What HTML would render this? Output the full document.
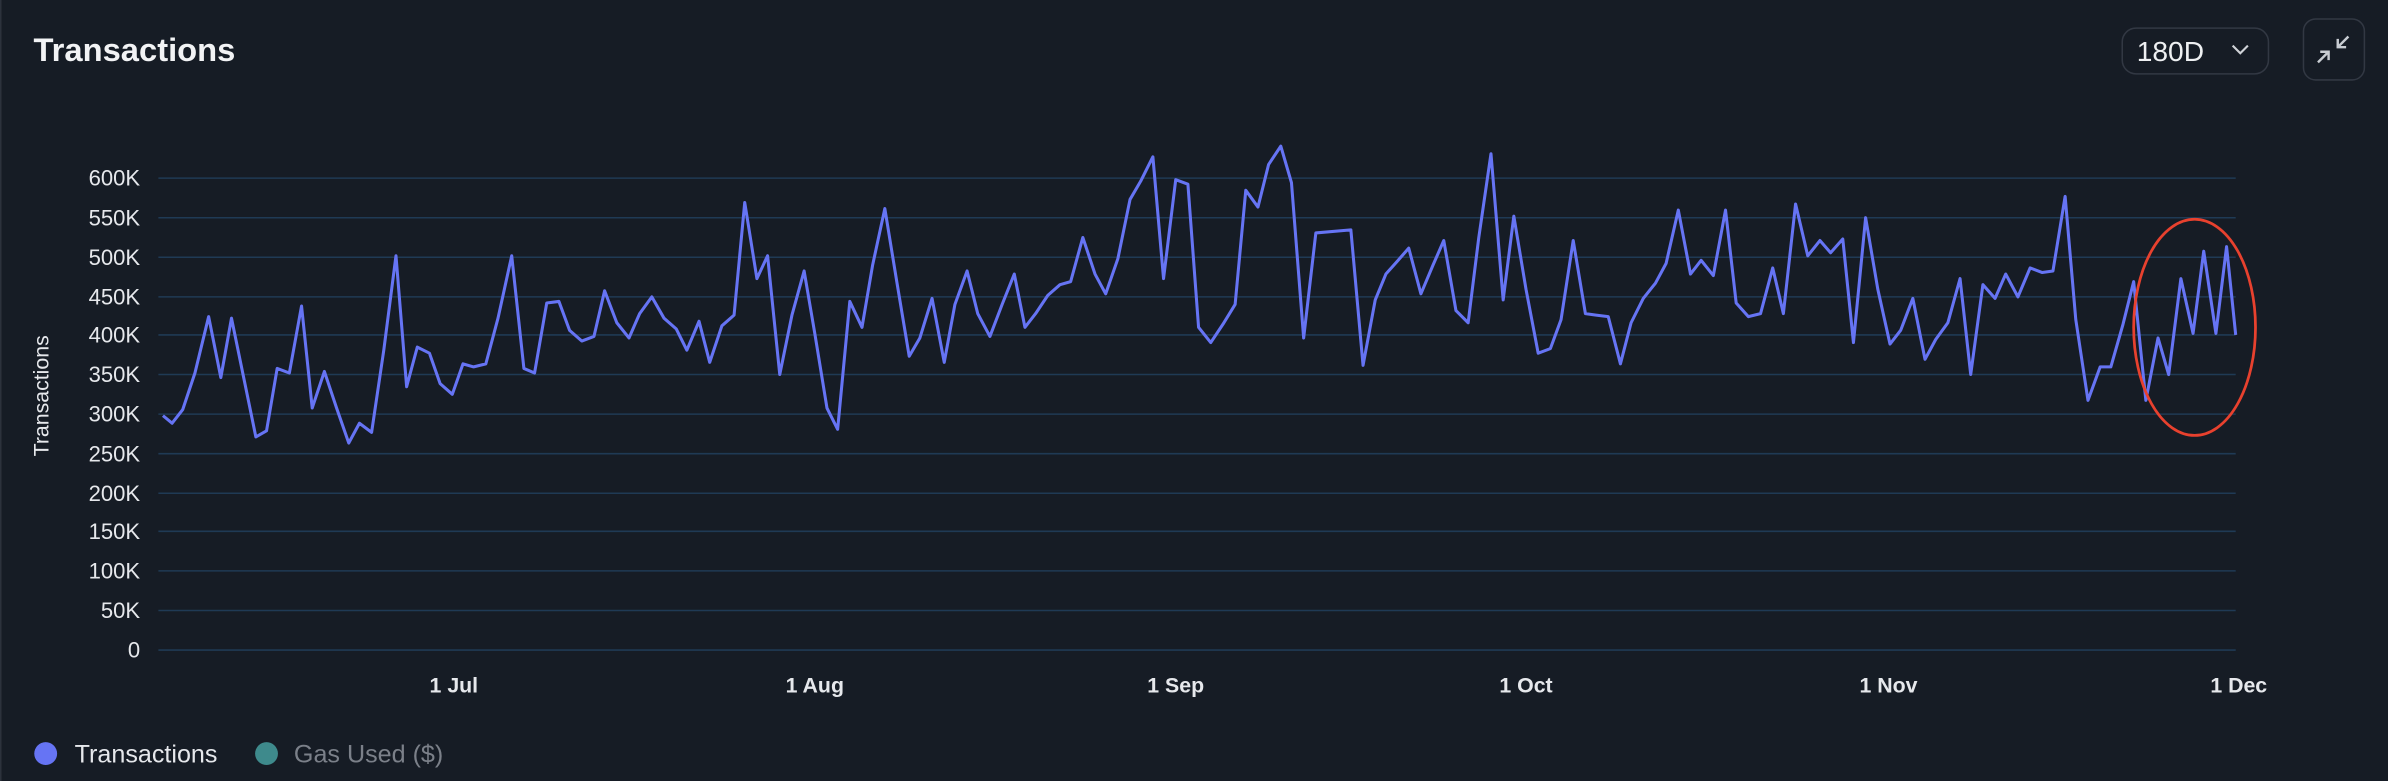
<!DOCTYPE html>
<html><head><meta charset="utf-8"><style>
html,body{margin:0;padding:0;background:#161c25;}
svg{display:block}
text{font-family:"Liberation Sans",sans-serif;}
</style></head><body>
<svg width="2388" height="781" viewBox="0 0 1568 513" preserveAspectRatio="none">
<rect width="1568" height="513" fill="#161c25"/>
<line x1="0.5" y1="0" x2="0.5" y2="513" stroke="#2c323c" stroke-width="1"/>
<text x="22" y="40" fill="#f2f3f5" font-size="21.5" font-weight="bold">Transactions</text>
<rect x="1393.5" y="18.5" width="96" height="30" rx="9" fill="none" stroke="#323843"/>
<text x="1403" y="40" fill="#eef0f2" font-size="18.5">180D</text>
<path d="M1466 30 l5 5 l5 -5" fill="none" stroke="#d0d3d8" stroke-width="1.4"/>
<rect x="1512.5" y="12.5" width="40" height="40" rx="8" fill="none" stroke="#323843"/>
<g stroke="#c8ccd2" stroke-width="1.6" fill="none">
<path d="M1542 24 l-7 7 M1535 25.5 v5.5 h5.5"/>
<path d="M1522 41 l7 -7 M1529 39.5 v-5.5 h-5.5"/>
</g>
<g stroke="#1f3a55" stroke-width="1">
<line x1="104" x2="1468" y1="117" y2="117"/><line x1="104" x2="1468" y1="143" y2="143"/>
<line x1="104" x2="1468" y1="169" y2="169"/><line x1="104" x2="1468" y1="195" y2="195"/>
<line x1="104" x2="1468" y1="220" y2="220"/><line x1="104" x2="1468" y1="246" y2="246"/>
<line x1="104" x2="1468" y1="272" y2="272"/><line x1="104" x2="1468" y1="298" y2="298"/>
<line x1="104" x2="1468" y1="324" y2="324"/><line x1="104" x2="1468" y1="349" y2="349"/>
<line x1="104" x2="1468" y1="375" y2="375"/><line x1="104" x2="1468" y1="401" y2="401"/>
<line x1="104" x2="1468" y1="427" y2="427"/>
</g>
<g fill="#e6e8ec" font-size="14.5" text-anchor="end">
<text x="92" y="122">600K</text><text x="92" y="148">550K</text><text x="92" y="174">500K</text>
<text x="92" y="200">450K</text><text x="92" y="225">400K</text><text x="92" y="251">350K</text>
<text x="92" y="277">300K</text><text x="92" y="303">250K</text><text x="92" y="329">200K</text>
<text x="92" y="354">150K</text><text x="92" y="380">100K</text><text x="92" y="406">50K</text>
<text x="92" y="432">0</text>
</g>
<text transform="translate(32,260) rotate(-90)" fill="#e6e8ec" font-size="14" text-anchor="middle">Transactions</text>
<g fill="#e6e8ec" font-size="14" font-weight="bold" text-anchor="middle">
<text x="298" y="455">1 Jul</text><text x="535" y="455">1 Aug</text><text x="772" y="455">1 Sep</text>
<text x="1002" y="455">1 Oct</text><text x="1240" y="455">1 Nov</text><text x="1470" y="455">1 Dec</text>
</g>
<polyline fill="none" stroke="#6674f4" stroke-width="2" stroke-linejoin="round" points="107,273 113,278 120,269 128,245 137,208 145,248 152,209 160,248 168,287 175,283 182,242 190,245 198,201 205,268 213,244 221,268 229,291 236,278 244,284 252,230 260,168 267,254 274,228 282,232 289,252 297,259 304,239 311,241 319,239 327,209 336,168 344,242 351,245 359,199 367,198 374,217 382,224 390,221 397,191 405,212 413,222 420,206 428,195 436,209 444,216 451,230 459,211 466,238 474,214 482,207 489,133 497,183 504,168 512,246 520,207 528,178 535,219 543,268 550,282 558,198 566,215 573,174 581,137 589,186 597,234 604,222 612,196 620,238 627,200 635,178 642,206 650,221 658,200 666,180 673,215 680,206 688,194 696,187 703,185 711,156 719,180 726,193 734,170 742,131 749,119 757,103 764,183 772,118 780,121 787,215 795,225 803,213 811,200 818,125 826,136 833,108 841,96 848,120 856,222 864,153 887,151 895,240 903,197 910,180 918,171 925,163 933,193 941,174 948,158 956,204 964,212 971,156 979,101 987,197 994,142 1002,190 1010,232 1018,229 1025,210 1033,158 1041,206 1048,207 1056,208 1064,239 1071,212 1079,196 1087,186 1094,173 1102,138 1110,180 1117,171 1125,181 1133,138 1140,199 1148,208 1156,206 1164,176 1171,206 1179,134 1187,168 1195,158 1202,166 1210,157 1217,225 1225,143 1233,190 1241,226 1248,217 1256,196 1264,236 1271,223 1279,212 1287,183 1294,246 1302,187 1310,196 1317,180 1325,195 1333,176 1341,179 1348,178 1356,129 1363,210 1371,263 1379,241 1386,241 1394,213 1401,185 1409,263 1417,222 1424,246 1432,183 1440,219 1447,165 1455,219 1462,162 1468,220"/>
<ellipse cx="1441" cy="215" rx="40" ry="71" fill="none" stroke="#e8412e" stroke-width="1.8"/>
<circle cx="30" cy="495" r="7.5" fill="#6674f4"/>
<text x="49" y="501" fill="#e6e8ec" font-size="16.5">Transactions</text>
<circle cx="175" cy="495" r="7.5" fill="#3e8a8c"/>
<text x="193" y="501" fill="#7b8089" font-size="16.5">Gas Used ($)</text>
</svg>
</body></html>
